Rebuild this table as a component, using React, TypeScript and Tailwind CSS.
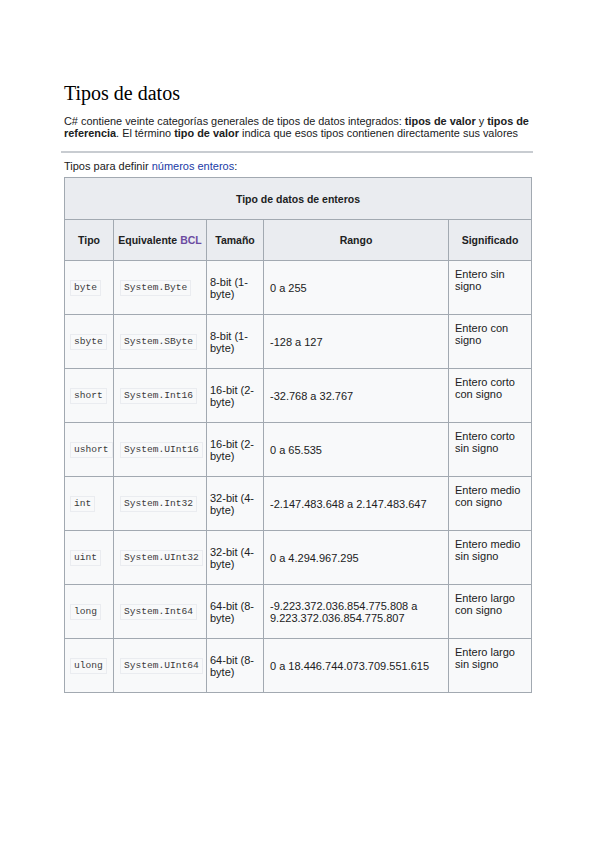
import React from "react";

interface IntType {
  tipo: string;
  bcl: string;
  size: string[];
  rango: string[];
  meaning: string[];
}

const rows: IntType[] = [
  { tipo: "byte", bcl: "System.Byte", size: ["8-bit (1-", "byte)"], rango: ["0 a 255"], meaning: ["Entero sin", "signo"] },
  { tipo: "sbyte", bcl: "System.SByte", size: ["8-bit (1-", "byte)"], rango: ["-128 a 127"], meaning: ["Entero con", "signo"] },
  { tipo: "short", bcl: "System.Int16", size: ["16-bit (2-", "byte)"], rango: ["-32.768 a 32.767"], meaning: ["Entero corto", "con signo"] },
  { tipo: "ushort", bcl: "System.UInt16", size: ["16-bit (2-", "byte)"], rango: ["0 a 65.535"], meaning: ["Entero corto", "sin signo"] },
  { tipo: "int", bcl: "System.Int32", size: ["32-bit (4-", "byte)"], rango: ["-2.147.483.648 a 2.147.483.647"], meaning: ["Entero medio", "con signo"] },
  { tipo: "uint", bcl: "System.UInt32", size: ["32-bit (4-", "byte)"], rango: ["0 a 4.294.967.295"], meaning: ["Entero medio", "sin signo"] },
  {
    tipo: "long",
    bcl: "System.Int64",
    size: ["64-bit (8-", "byte)"],
    rango: ["-9.223.372.036.854.775.808 a", "9.223.372.036.854.775.807"],
    meaning: ["Entero largo", "con signo"],
  },
  { tipo: "ulong", bcl: "System.UInt64", size: ["64-bit (8-", "byte)"], rango: ["0 a 18.446.744.073.709.551.615"], meaning: ["Entero largo", "sin signo"] },
];

function Lines({ items }: { items: string[] }) {
  return (
    <>
      {items.map((l, i) => (
        <div key={i} className="whitespace-nowrap">
          {l}
        </div>
      ))}
    </>
  );
}

function Code({ children }: { children: React.ReactNode }) {
  return (
    <code className="inline-block border border-[#eaecf0] bg-[#f8f9fa] px-[3px] leading-[12px] py-[1px] text-[9.6px] text-[#3a3a3a] font-['Liberation_Mono',monospace]">
      {children}
    </code>
  );
}

export default function App() {
  return (
    <div className="min-h-[842px] w-[595px] bg-white font-['Liberation_Sans',Arial,sans-serif] text-[#202122]">
      <div className="pl-[64px] pr-[56px] pt-[80px]">
        <h1 className="font-['Liberation_Serif',serif] text-[20px] leading-[26px] text-black">Tipos de datos</h1>

        {/* dos líneas como en la referencia */}
        <p className="mt-[9px] text-[10.9px] leading-[12px] whitespace-nowrap">
          C# contiene veinte categorías generales de tipos de datos integrados: <b>tipos de valor</b> y <b>tipos de</b>
          <br />
          <b>referencia</b>. El término <b>tipo de valor</b> indica que esos tipos contienen directamente sus valores
        </p>
      </div>

      <div className="ml-[61px] mr-[62px] mt-[12px] h-[2px] bg-[#c8ccd1]" />

      <div className="pl-[64px] pr-[62px]">
        <p className="mt-[7px] text-[11px] leading-[12px]">
          Tipos para definir <span className="text-[#1a3aa6]">números enteros</span>:
        </p>

        <table className="mt-[5px] w-[467px] table-fixed border-collapse border border-[#a2a9b1] text-[11px] leading-[12px]">
          <colgroup>
            <col className="w-[49px]" />
            <col className="w-[93px]" />
            <col className="w-[57px]" />
            <col className="w-[185px]" />
            <col className="w-[83px]" />
          </colgroup>
          <thead>
            <tr className="h-[42px] bg-[#eaecf0] text-[10.5px]">
              <th colSpan={5} className="border border-[#a2a9b1] text-center font-bold">
                Tipo de datos de enteros
              </th>
            </tr>
            <tr className="h-[41px] bg-[#eaecf0] text-[10.5px]">
              <th className="border border-[#a2a9b1] text-center font-bold">Tipo</th>
              <th className="border border-[#a2a9b1] text-center font-bold whitespace-nowrap">
                Equivalente <span className="text-[#6b4ba1]">BCL</span>
              </th>
              <th className="border border-[#a2a9b1] text-center font-bold">Tamaño</th>
              <th className="border border-[#a2a9b1] text-center font-bold">Rango</th>
              <th className="border border-[#a2a9b1] text-center font-bold">Significado</th>
            </tr>
          </thead>
          <tbody>
            {rows.map((r) => (
              <tr key={r.tipo} className="h-[54px] bg-[#f8f9fa]">
                <td className="border border-[#a2a9b1] pl-[5px] align-middle">
                  <Code>{r.tipo}</Code>
                </td>
                <td className="border border-[#a2a9b1] pl-[6px] align-middle">
                  <Code>{r.bcl}</Code>
                </td>
                <td className="border border-[#a2a9b1] pl-[3px] align-middle">
                  <Lines items={r.size} />
                </td>
                <td className="border border-[#a2a9b1] pl-[6px] align-middle">
                  <Lines items={r.rango} />
                </td>
                <td className="border border-[#a2a9b1] pl-[6px] pt-[7px] align-top">
                  <Lines items={r.meaning} />
                </td>
              </tr>
            ))}
          </tbody>
        </table>
      </div>
    </div>
  );
}
